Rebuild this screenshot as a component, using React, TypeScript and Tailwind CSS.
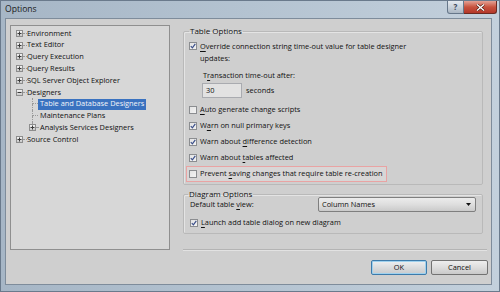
import React from "react";

const font = "font-['Open_Sans',_'Noto_Sans',_sans-serif]";

function Check({ checked }: { checked?: boolean }) {
  return (
    <span className="flex h-[8px] w-[8px] shrink-0 items-center justify-center border border-[#8b8d90] bg-gradient-to-br from-[#e4e4e4] to-[#f3f3f3]">
      {checked && (
        <svg width="6" height="6" viewBox="0 0 6 6">
          <path d="M0.8 3.2 L2.4 4.9 L5.3 0.9" fill="none" stroke="#3b4f8a" strokeWidth="1.2" />
        </svg>
      )}
    </span>
  );
}

function Expander({ minus }: { minus?: boolean }) {
  return (
    <span className="flex h-[7px] w-[7px] shrink-0 items-center justify-center border border-[#8d8d8d] bg-gradient-to-b from-[#f4f4f4] to-[#c9c9c9]">
      <svg width="5" height="5" viewBox="0 0 5 5">
        <path d="M0.5 2.5 H4.5" stroke="#3a3a3a" strokeWidth="1" />
        {!minus && <path d="M2.5 0.5 V4.5" stroke="#3a3a3a" strokeWidth="1" />}
      </svg>
    </span>
  );
}

function TopItem({ label, minus }: { label: string; minus?: boolean }) {
  return (
    <div className="flex h-[11.8px] items-center pl-[5px]">
      <Expander minus={minus} />
      <span className="w-[4px] border-t border-dotted border-[#9a9a9a]" />
      <span className="whitespace-nowrap pl-[0px] leading-none">{label}</span>
    </div>
  );
}

function ChildItem({
  label,
  last,
  selected,
  expander,
}: {
  label: string;
  last?: boolean;
  selected?: boolean;
  expander?: boolean;
}) {
  return (
    <div className="flex h-[11.8px] items-stretch pl-[18px]">
      {expander ? (
        <div className="flex w-[9px] flex-col">
          <div className="ml-[3px] h-[2px] border-l border-dotted border-[#9a9a9a]" />
          <div className="flex items-center">
            <Expander />
            <span className="w-[2px] border-t border-dotted border-[#9a9a9a]" />
          </div>
          <div className={last ? "" : "ml-[3px] flex-1 border-l border-dotted border-[#9a9a9a]"} />
        </div>
      ) : (
        <div className="flex w-[9px] flex-col pl-[3px]">
          <div className="h-1/2 border-b border-l border-dotted border-[#9a9a9a]" />
          <div className={last ? "" : "flex-1 border-l border-dotted border-[#9a9a9a]"} />
        </div>
      )}
      <div className="flex items-center">
        <span
          className={
            "flex h-[11px] items-center whitespace-nowrap px-[2px] leading-none " +
            (selected ? "bg-[#3a72c0] text-[#f2f4f8]" : "")
          }
        >
          {label}
        </span>
      </div>
    </div>
  );
}

function CheckRow({
  checked,
  children,
  boxed,
}: {
  checked?: boolean;
  children: React.ReactNode;
  boxed?: boolean;
}) {
  return (
    <div
      className={
        "flex h-[16px] items-center gap-[3px] " +
        (boxed ? "w-[201px] border border-[#e9a3a3] bg-[#d8d6d6] pl-[2px]" : "pl-[3px]")
      }
    >
      <Check checked={checked} />
      <span className="whitespace-nowrap leading-none">{children}</span>
    </div>
  );
}

function U({ children }: { children: React.ReactNode }) {
  return <span className="underline decoration-[0.5px] underline-offset-[1.5px]">{children}</span>;
}

export default function App() {
  return (
    <div
      className={
        "flex h-[292px] w-[500px] flex-col overflow-hidden border border-[#6a7a8c] bg-gradient-to-r from-[#a6b6c6] via-[#b4c3d1] to-[#c3d0dc] text-[7.4px] text-[#111] " +
        font
      }
    >
      {/* title bar */}
      <div className="flex h-[17px] shrink-0 items-start justify-between">
        <span className="pl-[4px] pt-[4px] text-[8.6px] leading-none text-[#1a1a1a]">Options</span>
        <div className="mr-[2px] flex">
          <div className="flex h-[13px] w-[17px] items-center justify-center rounded-bl-[3px] border border-t-0 border-[#66778a] bg-gradient-to-b from-[#e4e9ef] via-[#c9d2db] to-[#aab6c3] text-[8px] font-bold leading-none text-[#3b4656]">
            ?
          </div>
          <div className="flex h-[13px] w-[33px] items-center justify-center rounded-br-[3px] border border-l-0 border-t-0 border-[#6b2a22] bg-gradient-to-b from-[#e3a195] via-[#c8523e] to-[#b3372a]">
            <svg width="9" height="7" viewBox="0 0 9 7">
              <path d="M1 0.5 L8 6.5 M8 0.5 L1 6.5" stroke="#4a1a12" strokeWidth="2.6" />
              <path d="M1 0.5 L8 6.5 M8 0.5 L1 6.5" stroke="#ffffff" strokeWidth="1.4" />
            </svg>
          </div>
        </div>
      </div>

      {/* client area */}
      <div className="mb-[6px] ml-[4px] mr-[7px] flex flex-1 flex-col border border-[#7e8c9b] bg-[#cfcfcf]">
        <div className="flex h-[231px] shrink-0">
          {/* tree */}
          <div className="ml-[4px] mt-[6px] flex h-[225px] w-[160px] flex-col border border-[#8f8f8f] bg-[#d7d7d7] pt-[1.5px]">
            <TopItem label="Environment" />
            <TopItem label="Text Editor" />
            <TopItem label="Query Execution" />
            <TopItem label="Query Results" />
            <TopItem label="SQL Server Object Explorer" />
            <TopItem label="Designers" minus />
            <ChildItem label="Table and Database Designers" selected />
            <ChildItem label="Maintenance Plans" />
            <ChildItem label="Analysis Services Designers" expander last />
            <TopItem label="Source Control" />
          </div>

          {/* right side */}
          <div className="ml-[13px] flex w-[304px] flex-col pt-[7px]">
            <fieldset className="w-[300px] rounded-[2px] border border-[#b9b9b9] pb-[2px] pl-[2px] shadow-[inset_1px_1px_0_#e4e4e4]">
              <legend className="ml-[3px] px-[1px] text-[8px] leading-[10px]">Table Options</legend>
              <div className="mt-[4px] flex gap-[3px] pl-[3px]">
                <span className="pt-[2px]">
                  <Check checked />
                </span>
                <span className="w-[240px] leading-[12px]">
                  <U>O</U>verride connection string time-out value for table designer
                  <br />
                  updates:
                </span>
              </div>
              <div className="mt-[5px] pl-[17px] leading-[12px]">
                T<U>r</U>ansaction time-out after:
              </div>
              <div className="mt-[2px] flex items-center pl-[16px]">
                <div className="flex h-[15px] w-[40px] items-center border border-[#a9abb0] bg-[#e2e2e2] pl-[3px] leading-none">
                  30
                </div>
                <span className="pl-[4px] leading-none">seconds</span>
              </div>
              <div className="mt-[4px] flex flex-col">
                <CheckRow>
                  <U>A</U>uto generate change scripts
                </CheckRow>
                <CheckRow checked>
                  W<U>a</U>rn on null primary keys
                </CheckRow>
                <CheckRow checked>
                  Warn about <U>d</U>ifference detection
                </CheckRow>
                <CheckRow checked>
                  Warn about <U>t</U>ables affected
                </CheckRow>
                <CheckRow boxed>
                  Prevent <U>s</U>aving changes that require table re-creation
                </CheckRow>
              </div>
            </fieldset>

            <fieldset className="mt-[4px] w-[300px] rounded-[2px] border border-[#b9b9b9] pb-[4px] shadow-[inset_1px_1px_0_#e4e4e4]">
              <legend className="ml-[4px] px-[1px] text-[8px] leading-[10px]">Diagram Options</legend>
              <div className="-mt-[2px] flex items-center justify-between pl-[6px] pr-[6px]">
                <span className="leading-none">
                  Default table <U>v</U>iew:
                </span>
                <div className="flex h-[15px] w-[158px] items-center justify-between rounded-[2px] border border-[#7f7f7f] bg-gradient-to-b from-[#ececec] via-[#dedede] to-[#cacaca] pl-[3px] pr-[4px]">
                  <span className="leading-none">Column Names</span>
                  <svg width="5" height="3" viewBox="0 0 5 3">
                    <path d="M0 0 H5 L2.5 3 Z" fill="#111" />
                  </svg>
                </div>
              </div>
              <div className="mt-[5px] flex h-[12px] items-center gap-[3px] pl-[6px]">
                <Check checked />
                <span className="leading-none">
                  <U>L</U>aunch add table dialog on new diagram
                </span>
              </div>
            </fieldset>

            <div className="flex-1" />
            <div className="h-[1px] w-[304px] bg-[#b4b4b4] shadow-[0_1px_0_#e2e2e2]" />
          </div>
        </div>

        {/* buttons */}
        <div className="mt-[10px] flex justify-end gap-[4px] pr-[3px]">
          <button className="flex h-[15px] w-[56px] items-center justify-center rounded-[2px] border border-[#3d7bab] bg-gradient-to-b from-[#eef0f2] via-[#dadcde] to-[#c8cacc] leading-none shadow-[inset_0_0_0_1px_#9fd1ee]">
            OK
          </button>
          <button className="flex h-[15px] w-[57px] items-center justify-center rounded-[2px] border border-[#727272] bg-gradient-to-b from-[#eeeeee] via-[#dddddd] to-[#c9c9c9] leading-none">
            Cancel
          </button>
        </div>
      </div>
    </div>
  );
}
